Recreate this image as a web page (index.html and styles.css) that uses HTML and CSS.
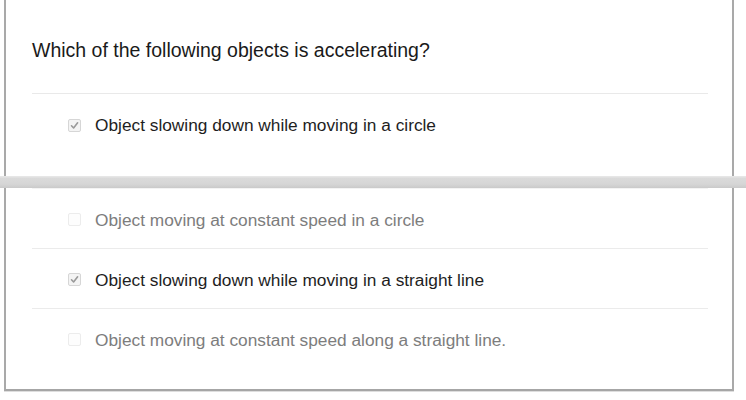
FILE: index.html
```html
<!DOCTYPE html>
<html>
<head>
<meta charset="utf-8">
<link rel="stylesheet" href="styles.css">
</head>
<body>
<div class="page">
  <section class="card card-top">
    <h1 class="question">Which of the following objects is accelerating?</h1>
    <div class="option first">
      <span class="box checked"><svg viewBox="0 0 13 13" width="13" height="13"><path d="M3.5 6.8 L5.6 9 L9.6 3.8" fill="none" stroke="#9a9a9a" stroke-width="1.6" stroke-linecap="round" stroke-linejoin="round"/></svg></span>
      <span class="label dark">Object slowing down while moving in a circle</span>
    </div>
  </section>
  <div class="seam"></div>
  <section class="card card-bottom">
    <div class="option">
      <span class="box"></span>
      <span class="label light">Object moving at constant speed in a circle</span>
    </div>
    <div class="option">
      <span class="box checked"><svg viewBox="0 0 13 13" width="13" height="13"><path d="M3.5 6.8 L5.6 9 L9.6 3.8" fill="none" stroke="#9a9a9a" stroke-width="1.6" stroke-linecap="round" stroke-linejoin="round"/></svg></span>
      <span class="label dark">Object slowing down while moving in a straight line</span>
    </div>
    <div class="option">
      <span class="box"></span>
      <span class="label light">Object moving at constant speed along a straight line.</span>
    </div>
  </section>
</div>
</body>
</html>
```

FILE: styles.css
```css
html, body {
  margin: 0;
  padding: 0;
  background: #ffffff;
}
body {
  font-family: "Liberation Sans", Arial, sans-serif;
  width: 746px;
  height: 400px;
  overflow: hidden;
}
.page {
  display: flex;
  flex-direction: column;
}
.card {
  margin-left: 4px;
  width: 726px;
  border-left: 2px solid #a9a9a9;
  border-right: 2px solid #a9a9a9;
  background: #fff;
}
.card-top {
  height: 176px;
}
.card-bottom {
  height: 201px;
  border-bottom: 2px solid #a6a6a6;
  box-shadow: 0 1px 0 #dedede;
}
.question {
  margin: 0 24px 0 26px;
  padding-top: 38px;
  height: 55px;
  font-size: 19.5px;
  line-height: 24px;
  font-weight: normal;
  color: #1a1a1a;
  border-bottom: 1px solid #e9e9e9;
}
.option {
  margin: 0 24px 0 26px;
  height: 57px;
  padding-top: 2px;
  border-top: 1px solid #ebebeb;
  display: flex;
  align-items: center;
  gap: 14px;
  padding-left: 36px;
}
.option.first {
  border-top: none;
  padding-top: 0;
  height: 62px;
}
.card-bottom .option:first-child {
  border-top-color: #f3f3f3;
}
.box {
  width: 11px;
  height: 11px;
  border: 1px solid #ececec;
  border-radius: 2px;
  background: #fdfdfd;
  position: relative;
  flex: none;
}
.box.checked {
  border-color: #d6d6d6;
  background: #f4f4f4;
}
.box svg {
  position: absolute;
  left: -1px;
  top: -1px;
}
.label {
  font-size: 17.3px;
  line-height: 22px;
}
.label.dark {
  color: #1e1e1e;
}
.label.light {
  color: #7d7d7d;
}
.seam {
  width: 746px;
  height: 12px;
  background: linear-gradient(#e6e6e6 0, #e6e6e6 1px, #dadada 2px, #d6d6d6 8px, #cdcdcd 11px, #c9c9c9 12px);
}
```
